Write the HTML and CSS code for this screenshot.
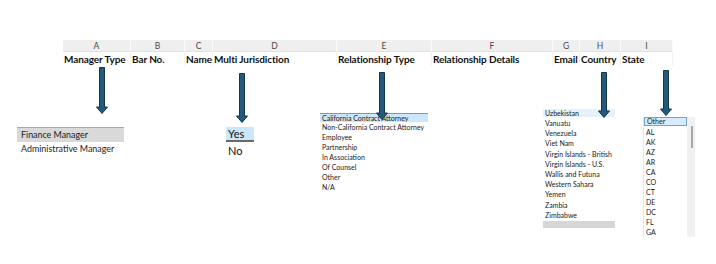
FILE: index.html
```html
<!DOCTYPE html>
<html lang="en">
<head>
    <meta charset="UTF-8">
    <title>Dropdown columns</title>
    <link rel="stylesheet" href="styles.css">
</head>
<body>
    <div class="sheet">
        <div class="letters">
            <div class="col">A</div>
            <div class="col">B</div>
            <div class="col">C</div>
            <div class="col">D</div>
            <div class="col">E</div>
            <div class="col">F</div>
            <div class="col">G</div>
            <div class="col">H</div>
            <div class="col">I</div>
        </div>
        <div class="headers">
            <div class="cell">Manager Type</div>
            <div class="cell">Bar No.</div>
            <div class="cell">Name</div>
            <div class="cell">Multi Jurisdiction</div>
            <div class="cell">Relationship Type</div>
            <div class="cell">Relationship Details</div>
            <div class="cell">Email</div>
            <div class="cell">Country</div>
            <div class="cell">State</div>
        </div>
    </div>

    <div class="drops">
        <div class="drop manager">
            <svg class="arrow" width="12" height="47" viewBox="0 0 12 47"><path d="M3.5 0.5 H8.5 V40 H11.5 L6 46.5 L0.5 40 H3.5 Z"/></svg>
            <ul class="list big">
                <li class="grey-sel">Finance Manager</li>
                <li>Administrative Manager</li>
            </ul>
        </div>

        <div class="drop yesno">
            <svg class="arrow" width="12" height="50" viewBox="0 0 12 50"><path d="M3.5 0.5 H8.5 V43 H11.5 L6 49.5 L0.5 43 H3.5 Z"/></svg>
            <ul class="list bigger">
                <li class="blue-sel">Yes</li>
                <li>No</li>
            </ul>
        </div>

        <div class="drop relation">
            <ul class="list small">
                <li class="blue-sel">California Contract Attorney</li>
                <li>Non-California Contract Attorney</li>
                <li>Employee</li>
                <li>Partnership</li>
                <li>In Association</li>
                <li>Of Counsel</li>
                <li>Other</li>
                <li>N/A</li>
            </ul>
            <svg class="arrow" width="12" height="48" viewBox="0 0 12 48"><path d="M3.5 0.5 H8.5 V41 H11.5 L6 47.5 L0.5 41 H3.5 Z"/></svg>
        </div>

        <div class="drop country">
            <ul class="list small">
                <li class="pale-sel">Uzbekistan</li>
                <li>Vanuatu</li>
                <li>Venezuela</li>
                <li>Viet Nam</li>
                <li>Virgin Islands - British</li>
                <li>Virgin Islands - U.S.</li>
                <li>Wallis and Futuna</li>
                <li>Western Sahara</li>
                <li>Yemen</li>
                <li>Zambia</li>
                <li>Zimbabwe</li>
                <li class="blank"></li>
            </ul>
            <svg class="arrow" width="12" height="46" viewBox="0 0 12 46"><path d="M3.5 0.5 H8.5 V39 H11.5 L6 45.5 L0.5 39 H3.5 Z"/></svg>
        </div>

        <div class="drop state">
            <div class="state-box">
                <ul class="list small">
                    <li class="outline-sel">Other</li>
                    <li>AL</li>
                    <li>AK</li>
                    <li>AZ</li>
                    <li>AR</li>
                    <li>CA</li>
                    <li>CO</li>
                    <li>CT</li>
                    <li>DE</li>
                    <li>DC</li>
                    <li>FL</li>
                    <li>GA</li>
                </ul>
                <div class="scrollbar"><div class="thumb"></div></div>
            </div>
            <svg class="arrow" width="12" height="46" viewBox="0 0 12 46"><path d="M3.5 0.5 H8.5 V39 H11.5 L6 45.5 L0.5 39 H3.5 Z"/></svg>
        </div>
    </div>
</body>
</html>
```

FILE: styles.css
```css
* {
    margin: 0;
    padding: 0;
    box-sizing: border-box;
}

body {
    background-color: #ffffff;
    color: #1a1a1a;
    font-family: Lato, "Open Sans", sans-serif;
    width: 716px;
    height: 264px;
    overflow: hidden;
}

.sheet {
    margin: 40px 0 0 63px;
    width: 610px;
}

.letters, .headers {
    display: grid;
    grid-template-columns: 68px 54px 28px 124px 95px 121px 27px 41px 52px;
}

.letters {
    height: 12px;
    background-color: #efefef;
    border-bottom: 1px solid #e2e2e2;
}

.col {
    font-size: 8.5px;
    line-height: 12px;
    color: #4a4a4a;
    text-align: center;
    border-right: 1px solid #fafafa;
}

.headers {
    height: 14px;
}

.cell {
    font-size: 10px;
    font-weight: bold;
    letter-spacing: -0.1px;
    line-height: 14px;
    padding-left: 1px;
    white-space: nowrap;
    border-right: 1px solid #f2f2f2;
    color: #111;
}

.drops {
    display: flex;
    align-items: flex-start;
}

.drop {
    position: relative;
}

.arrow {
    position: absolute;
    z-index: 2;
}

.arrow path {
    fill: #225a7b;
    stroke: #15354c;
    stroke-width: 1;
}

.list {
    list-style: none;
}

.list li {
    white-space: nowrap;
}

/* Manager Type */
.manager {
    margin-left: 17px;
    width: 107px;
    padding-top: 61px;
}

.manager .arrow {
    left: 79px;
    top: 1px;
}

.big li {
    font-size: 8.9px;
    line-height: 14px;
    padding-left: 4px;
    color: #1a1a1a;
}

.grey-sel {
    background-color: #d9d9d9;
    border-top: 1px solid #a8a8a8;
}

/* Yes / No */
.yesno {
    margin-left: 102px;
    width: 28px;
    padding-top: 61px;
}

.yesno .arrow {
    left: 10px;
    top: 7px;
}

.bigger li {
    font-size: 11px;
    line-height: 17px;
    padding-left: 2px;
    color: #111;
}

.bigger .blue-sel {
    border-bottom: 2px solid #6a6a6a;
    line-height: 13px;
}

.blue-sel {
    background-color: #cce6fa;
}

/* Relationship Type */
.relation {
    margin-left: 66px;
    width: 108px;
    padding-top: 47px;
}

.relation .arrow {
    left: 56px;
    top: 6px;
}

.small li {
    font-size: 7px;
    line-height: 10px;
    padding-left: 2px;
    color: #1a1a1a;
}

.relation .blue-sel {
    border-top: 1px solid #7c98ad;
    line-height: 8px;
}

/* Country */
.country {
    margin-left: 115px;
    width: 72px;
    padding-top: 43px;
}

.country .arrow {
    left: 55px;
    top: 6px;
}

.pale-sel {
    background-color: #e5f1fb;
}

.country .small li {
    line-height: 10.2px;
}

.country .small li.pale-sel {
    line-height: 8px;
    margin-bottom: 1px;
}

.blank {
    background-color: #d6d6d6;
    height: 7px;
    margin-top: 1px;
}

/* State */
.state {
    margin-left: 28px;
    width: 52px;
    padding-top: 51px;
}

.state .arrow {
    left: 17px;
    top: 4px;
}

.state-box {
    display: flex;
    height: 120px;
    border-left: 1px solid #e6e6e6;
    overflow: hidden;
}

.state-box .list {
    flex-grow: 1;
}

.outline-sel {
    background-color: #d6ebfb;
    border: 1px solid #6fa4cf;
    line-height: 7px !important;
    margin-bottom: 1px;
}

.scrollbar {
    width: 8px;
    background-color: #f0f0f0;
    padding: 9px 0 0 4px;
}

.thumb {
    width: 2px;
    height: 22px;
    background-color: #a9a9a9;
}
```
